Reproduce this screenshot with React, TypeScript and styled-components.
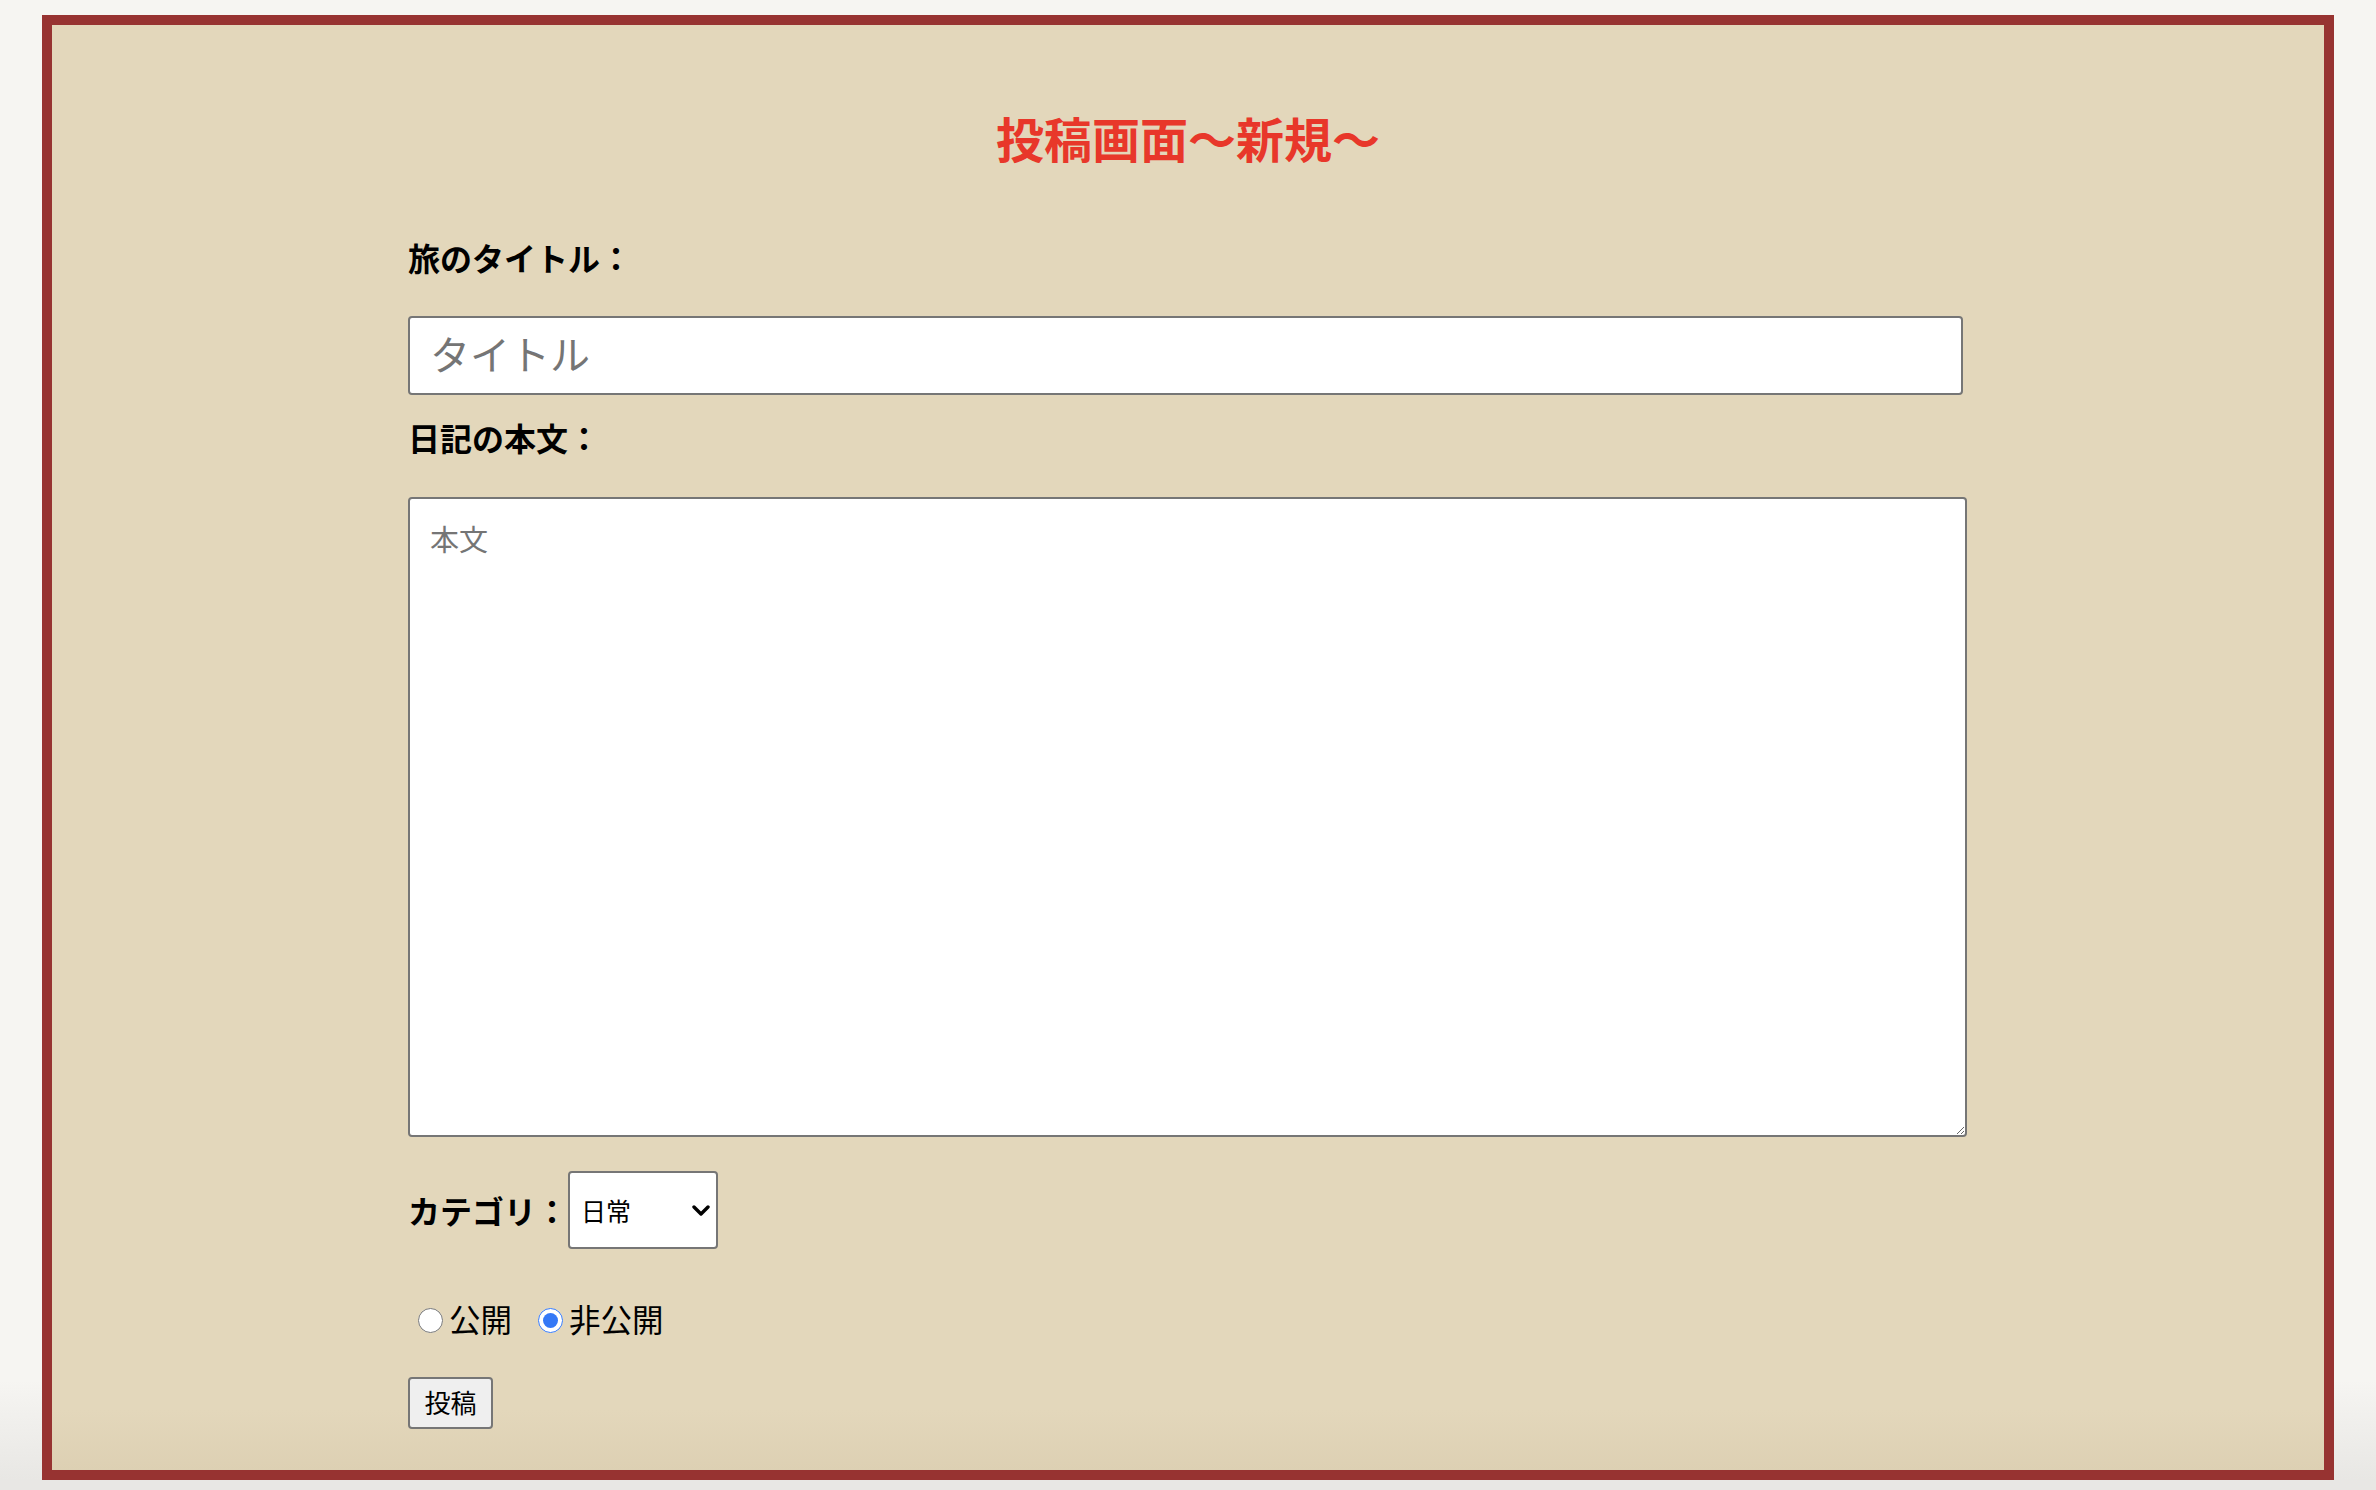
import React, { useState } from 'react';
import styled, { createGlobalStyle } from 'styled-components';

const GlobalStyle = createGlobalStyle`
  html, body {
    margin: 0;
    padding: 0;
  }
  body {
    min-height: 1490px;
    background: linear-gradient(to bottom, #f6f5f2 0, #f6f5f2 1380px, #e8e7e4 1480px);
    font-family: 'Noto Sans CJK JP', 'Noto Sans', sans-serif;
    color: #000;
  }
`;

const FONT = `'Noto Sans CJK JP', 'Noto Sans', sans-serif`;

function PostPage(): React.ReactElement {
  const [visibility, setVisibility] = useState('private');

  return (
    <>
      <GlobalStyle />
      <Page>
        <Frame>
          <Title>投稿画面〜新規〜</Title>
          <Form onSubmit={(e) => e.preventDefault()}>
            <Label>旅のタイトル：</Label>
            <TitleInput type="text" placeholder="タイトル" />
            <Label $top={26}>日記の本文：</Label>
            <BodyArea placeholder="本文" />
            <CategoryRow>
              <InlineLabel>カテゴリ：</InlineLabel>
              <SelectWrap>
                <Select defaultValue="daily">
                  <option value="daily">日常</option>
                  <option value="trip">旅行</option>
                  <option value="food">グルメ</option>
                </Select>
                <Chevron viewBox="0 0 18 11" aria-hidden>
                  <path d="M2 2 L9 9 L16 2" fill="none" stroke="#000" strokeWidth="3.4" strokeLinecap="round" strokeLinejoin="round" />
                </Chevron>
              </SelectWrap>
            </CategoryRow>
            <RadioRow>
              <RadioLabel>
                <Radio
                  type="radio"
                  name="visibility"
                  checked={visibility === 'public'}
                  onChange={() => setVisibility('public')}
                />
                <RadioText>公開</RadioText>
              </RadioLabel>
              <RadioLabel>
                <Radio
                  type="radio"
                  name="visibility"
                  checked={visibility === 'private'}
                  onChange={() => setVisibility('private')}
                />
                <RadioText>非公開</RadioText>
              </RadioLabel>
            </RadioRow>
            <SubmitButton type="submit">投稿</SubmitButton>
          </Form>
        </Frame>
      </Page>
    </>
  );
}

const Page = styled.div`
  box-sizing: border-box;
  padding: 15px 42px 10px;
  height: 1490px;
`;

const Frame = styled.div`
  box-sizing: border-box;
  height: 1465px;
  border: 10px solid #973331;
  background: linear-gradient(to bottom, #e3d7bb 0, #e3d7bb calc(100% - 60px), #ddd0b3 100%);
  display: flex;
  flex-direction: column;
  align-items: center;
`;

const Title = styled.h1`
  margin: 87px 0 0;
  font-family: ${FONT};
  font-size: 48px;
  line-height: 50px;
  font-weight: 700;
  color: #e8372a;
`;

const Form = styled.form`
  width: 1560px;
  display: flex;
  flex-direction: column;
  align-items: flex-start;
`;

const Label = styled.label<{ $top?: number }>`
  display: block;
  margin-top: ${(p) => p.$top ?? 79}px;
  padding-bottom: 3px;
  font-family: ${FONT};
  font-size: 32px;
  line-height: 32px;
  font-weight: 700;
`;

const TitleInput = styled.input`
  box-sizing: border-box;
  margin-top: 40px;
  width: 1555px;
  height: 79px;
  padding: 0 20px 5px;
  border: 2px solid #767676;
  border-radius: 4px;
  background: #fff;
  font-family: ${FONT};
  font-size: 40px;
  outline: none;

  &::placeholder {
    color: #757575;
  }
`;

const BodyArea = styled.textarea`
  box-sizing: border-box;
  margin-top: 41px;
  width: 1559px;
  height: 640px;
  padding: 22px 20px;
  border: 2px solid #767676;
  border-radius: 4px;
  background: #fff;
  font-family: ${FONT};
  font-size: 29px;
  line-height: 1.2;
  outline: none;
  resize: both;

  &::placeholder {
    color: #757575;
  }
`;

const CategoryRow = styled.div`
  margin-top: 34px;
  display: flex;
  align-items: center;
`;

const InlineLabel = styled.span`
  font-family: ${FONT};
  font-size: 32px;
  line-height: 32px;
  font-weight: 700;
`;

const SelectWrap = styled.div`
  position: relative;
  display: flex;
`;

const Select = styled.select`
  box-sizing: border-box;
  appearance: none;
  width: 150px;
  height: 78px;
  padding: 0 36px 0 11px;
  border: 2px solid #767676;
  border-radius: 4px;
  background: #fff;
  color: #000;
  font-family: ${FONT};
  font-size: 25px;
  outline: none;
`;

const Chevron = styled.svg`
  position: absolute;
  right: 8px;
  top: 34px;
  width: 18px;
  height: 11px;
  pointer-events: none;
`;

const RadioRow = styled.div`
  margin-top: 54px;
  display: flex;
  align-items: center;
  gap: 16px;
`;

const RadioLabel = styled.label`
  display: flex;
  align-items: center;
  height: 34px;
`;

const RadioText = styled.span`
  padding-bottom: 5px;
  font-family: ${FONT};
  font-size: 31.5px;
  line-height: 32px;
  font-weight: 400;
`;

const Radio = styled.input`
  width: 25px;
  height: 25px;
  margin: 0 6px 0 10px;
  accent-color: #3478f6;
`;

const SubmitButton = styled.button`
  box-sizing: border-box;
  margin-top: 40px;
  width: 85px;
  height: 52px;
  padding: 0 0 3px;
  border: 2px solid #767676;
  border-radius: 4px;
  background: #efefef;
  color: #000;
  font-family: ${FONT};
  font-size: 26px;
  line-height: 1;
`;

export default PostPage;
